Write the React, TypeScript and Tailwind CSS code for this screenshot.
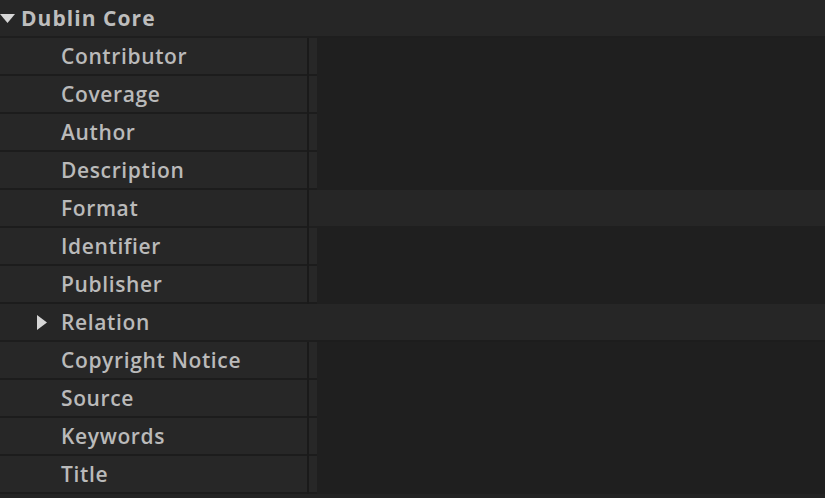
import React from 'react';

type Field = {
  label: string;
  expandable?: boolean;
  highlighted?: boolean;
};

const fields: Field[] = [
  { label: 'Contributor' },
  { label: 'Coverage' },
  { label: 'Author' },
  { label: 'Description' },
  { label: 'Format', highlighted: true },
  { label: 'Identifier' },
  { label: 'Publisher' },
  { label: 'Relation', expandable: true },
  { label: 'Copyright Notice' },
  { label: 'Source' },
  { label: 'Keywords' },
  { label: 'Title' },
];

const font = { fontFamily: '"Open Sans", "Liberation Sans", sans-serif' };

const FieldRow: React.FC<{ field: Field }> = ({ field }) => {
  // Group rows (like Relation) span the whole width with no value column
  if (field.expandable) {
    return (
      <div className="flex h-[38px] bg-[#262626] border-b-2 border-[#1d1d1d]">
        <div className="w-[61px] flex items-center justify-start pl-[37px]">
          <svg width="10" height="15" viewBox="0 0 10 15">
            <polygon points="0,0 10,7.5 0,15" fill="#d6d6d6" />
          </svg>
        </div>
        <span className="flex items-center text-[21px] font-[550] tracking-[0.03em] text-[#bababa] leading-none">
          {field.label}
        </span>
      </div>
    );
  }

  return (
    <div className="flex h-[38px]">
      <div className="w-[307px] flex items-center pl-[61px] bg-[#272727] border-b-2 border-[#1c1c1c]">
        <span className="text-[21px] font-[550] tracking-[0.03em] text-[#bababa] leading-none">{field.label}</span>
      </div>
      <div className="w-[2px] bg-[#1a1a1a]" />
      <div
        className={`w-[8px] border-b-2 ${
          field.highlighted ? 'bg-[#262626] border-[#1f1f1f]' : 'bg-[#272727] border-[#1c1c1c]'
        }`}
      />
      <div
        className={`flex-1 border-b-2 border-[#1f1f1f] ${field.highlighted ? 'bg-[#262626]' : 'bg-[#1f1f1f]'}`}
      />
    </div>
  );
};

export default function App() {
  return (
    <div className="w-[825px] h-[498px] overflow-hidden bg-[#232323] antialiased" style={font}>
      {/* Section header */}
      <div className="flex items-center h-[38px] bg-[#262626] border-b-2 border-[#1e1e1e]">
        <svg width="15" height="9" viewBox="0 0 15 9" className="mr-[6px]">
          <polygon points="0,0 15,0 7.5,9" fill="#d6d6d6" />
        </svg>
        <span className="text-[21px] font-bold tracking-[0.05em] text-[#bdbdbd] leading-none">Dublin Core</span>
      </div>

      <div className="flex flex-col">
        {fields.map((f) => (
          <FieldRow key={f.label} field={f} />
        ))}
      </div>
    </div>
  );
}
